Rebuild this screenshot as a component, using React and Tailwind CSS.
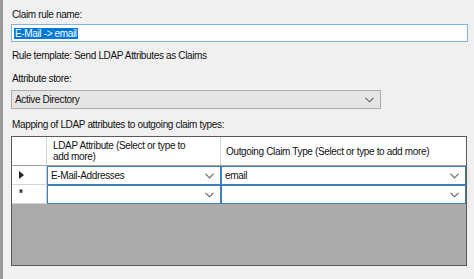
import React from "react"

function Chevron({ className = "" }) {
  return (
    <svg width="9" height="6" viewBox="0 0 9 6" className={className}>
      <path d="M0.5 0.8 L4.5 4.8 L8.5 0.8" fill="none" stroke="#606060" strokeWidth="1.1" />
    </svg>
  )
}

function ComboCell({ value }) {
  return (
    <div className="h-full border-[1.5px] border-[#3d7ebf] bg-white flex items-center justify-between pl-[3px] pr-[6px]">
      <span className="leading-none">{value}</span>
      <Chevron />
    </div>
  )
}

export default function App() {
  return (
    <div
      className="w-[474px] h-[279px] bg-[#f0f0f0] border-l-[3px] border-[#9a9a9a] overflow-hidden text-[10px] tracking-[-0.35px] text-[#111]"
      style={{ fontFamily: "'Segoe UI', 'Liberation Sans', Arial, sans-serif" }}
    >
      <div className="pl-[8px] pr-[5px] pt-[7px]">
        <div className="h-[16px] leading-[16px] pl-[1px]">Claim rule name:</div>

        <div className="mt-[1px] h-[18px] w-[457px] bg-white border border-[#7eb4ea] flex items-center pl-[2px]">
          <span className="bg-[#0078d7] text-white leading-[11px] h-[11px] px-[1px]">E-Mail -&gt; email</span>
        </div>

        <div className="mt-[6px] h-[16px] leading-[16px] pl-[1px]">Rule template: Send LDAP Attributes as Claims</div>

        <div className="mt-[7px] h-[16px] leading-[16px] pl-[1px]">Attribute store:</div>

        <div className="mt-[3px] h-[19px] w-[370px] bg-[#e5e5e5] border border-[#adadad] flex items-center justify-between pl-[3px] pr-[6px]">
          <span className="leading-none">Active Directory</span>
          <Chevron />
        </div>

        <div className="mt-[8px] h-[16px] leading-[16px] pl-[1px]">Mapping of LDAP attributes to outgoing claim types:</div>

        <div className="mt-[3px] w-[456px] h-[130px] border border-[#5a5a5a] bg-[#ababab] flex flex-col">
          <div className="grid grid-cols-[35px_174px_1fr] h-[29px] bg-white border-b border-[#a0a0a0]">
            <div className="border-r border-[#d4d4d4]" />
            <div className="border-r border-[#d4d4d4] pl-[6px] pt-[3px] leading-[11px]">
              LDAP Attribute (Select or type to<br />add more)
            </div>
            <div className="pl-[5px] flex items-center">Outgoing Claim Type (Select or type to add more)</div>
          </div>

          <div className="grid grid-cols-[35px_174px_1fr] h-[19px]">
            <div className="bg-white border-r border-b border-[#d4d4d4] flex items-center pl-[7px]">
              <svg width="5" height="8" viewBox="0 0 5 8">
                <path d="M0 0 L5 4 L0 8 Z" fill="#222" />
              </svg>
            </div>
            <ComboCell value="E-Mail-Addresses" />
            <ComboCell value="email" />
          </div>

          <div className="grid grid-cols-[35px_174px_1fr] h-[19px]">
            <div className="bg-white border-r border-b border-[#d4d4d4] flex items-center pl-[7px]">
              <span className="text-[10px] leading-none text-[#222] font-bold">*</span>
            </div>
            <ComboCell value="" />
            <ComboCell value="" />
          </div>
        </div>
      </div>
    </div>
  )
}
